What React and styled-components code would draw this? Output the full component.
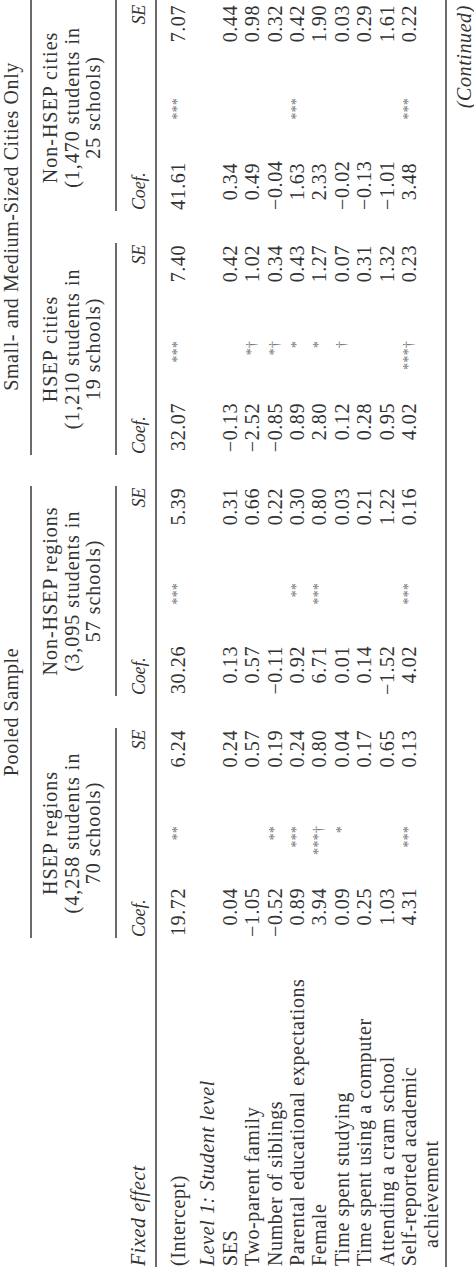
import React from 'react';
import styled, { createGlobalStyle } from 'styled-components';

const RULE = '#6b6b6b';
const INK = '#333333';

const GlobalStyle = createGlobalStyle`
  html, body { margin: 0; padding: 0; background: #ffffff; }
  body { overflow: hidden; }
`;

const Viewport = styled.div`
  position: relative;
  width: 474px;
  height: 1269px;
  overflow: hidden;
  background: #ffffff;
`;

/* The printed table is turned a quarter turn counter-clockwise on the page. */
const Sheet = styled.div`
  width: 1269px;
  height: 474px;
  transform-origin: 0 0;
  transform: translateY(1269px) rotate(-90deg);
  font-family: "Liberation Serif", "Times New Roman", serif;
  font-size: 20px;
  color: ${INK};
  letter-spacing: 0.6px;
`;

const Table = styled.table`
  width: 1269px;
  table-layout: fixed;
  border-collapse: separate;
  border-spacing: 0;
  margin-top: -2px;
  font-family: "Liberation Serif", "Times New Roman", serif;
  font-size: 20px;
  color: ${INK};
`;

const Col = styled.col`
  width: ${(p) => p.$w}px;
`;

const SpanHead = styled.th`
  font-weight: normal;
  text-align: center;
  white-space: nowrap;
  line-height: 22px;
  vertical-align: top;
  padding: 0 0 8px;
  border-bottom: ${(p) => (p.$rule ? `2px solid ${RULE}` : 'none')};
`;

const GroupHead = styled.th`
  font-weight: normal;
  text-align: center;
  white-space: nowrap;
  line-height: 21.5px;
  letter-spacing: 1px;
  vertical-align: top;
  padding: 8px ${(p) => p.$padRight || 0}px 10px 0;
  border-bottom: ${(p) => (p.$rule ? `2px solid ${RULE}` : 'none')};
`;

const ColHead = styled.th`
  font-weight: normal;
  font-style: italic;
  font-size: ${(p) => p.$size || 18}px;
  letter-spacing: ${(p) => (p.$size ? '0.6px' : '-0.2px')};
  text-align: ${(p) => p.$align || 'left'};
  white-space: nowrap;
  line-height: 22px;
  vertical-align: baseline;
  padding: 10.7px ${(p) => p.$pr || 0}px 5px ${(p) => p.$pl || 0}px;
  border-bottom: 2px solid ${RULE};
`;

const DataRow = styled.tr`
  & > td {
    padding-top: ${(p) => p.$pt || 0}px;
    padding-bottom: ${(p) => p.$pb || 0}px;
    border-bottom: ${(p) => (p.$last ? `2px solid ${RULE}` : 'none')};
  }
`;

const Label = styled.td`
  text-align: left;
  white-space: nowrap;
  vertical-align: top;
  line-height: 22.4px;
  padding-left: 1px;
  font-style: ${(p) => (p.$italic ? 'italic' : 'normal')};
`;

const Indent = styled.span`
  display: block;
  padding-left: 18px;
`;

const Num = styled.td`
  text-align: right;
  white-space: nowrap;
  vertical-align: top;
  line-height: 22.4px;
  padding-right: ${(p) => p.$pr || 0}px;
`;

const Sig = styled.span`
  font-size: 14.5px;
  line-height: 1;
  letter-spacing: 0;
  color: #777777;
  vertical-align: 3px;
`;

const Blank = styled.td``;
const BlankHead = styled.th`
  padding: 0;
  border-bottom: ${(p) => (p.$rule ? `2px solid ${RULE}` : 'none')};
`;

const Continued = styled.div`
  text-align: right;
  font-style: italic;
  line-height: 22px;
  padding-right: 7px;
  margin-top: 5.5px;
`;

const groups = [
  { title: 'HSEP regions', n: '4,258', s: '70', w: [50, 62, 98] },
  { title: 'Non-HSEP regions', n: '3,095', s: '57', w: [50, 63, 97] },
  { title: 'HSEP cities', n: '1,210', s: '19', w: [52, 62, 98] },
  { title: 'Non-HSEP cities', n: '1,470', s: '25', w: [48, 65, 95] },
];
const gaps = [32, 31, 32];
const TRAIL = 5;

const rows = [
  {
    label: '(Intercept)',
    v: [['19.72', '**', '6.24'], ['30.26', '***', '5.39'], ['32.07', '***', '7.40'], ['41.61', '***', '7.07']],
    pt: 9.8,
    pb: 7,
  },
  { label: 'Level 1: Student level', italic: true },
  { label: 'SES', v: [['0.04', '', '0.24'], ['0.13', '', '0.31'], ['−0.13', '', '0.42'], ['0.34', '', '0.44']] },
  { label: 'Two-parent family', v: [['−1.05', '', '0.57'], ['0.57', '', '0.66'], ['−2.52', '*†', '1.02'], ['0.49', '', '0.98']] },
  { label: 'Number of siblings', v: [['−0.52', '**', '0.19'], ['−0.11', '', '0.22'], ['−0.85', '*†', '0.34'], ['−0.04', '', '0.32']] },
  {
    label: 'Parental educational expectations',
    v: [['0.89', '***', '0.24'], ['0.92', '**', '0.30'], ['0.89', '*', '0.43'], ['1.63', '***', '0.42']],
  },
  { label: 'Female', v: [['3.94', '***†', '0.80'], ['6.71', '***', '0.80'], ['2.80', '*', '1.27'], ['2.33', '', '1.90']] },
  { label: 'Time spent studying', v: [['0.09', '*', '0.04'], ['0.01', '', '0.03'], ['0.12', '†', '0.07'], ['−0.02', '', '0.03']] },
  {
    label: 'Time spent using a computer',
    v: [['0.25', '', '0.17'], ['0.14', '', '0.21'], ['0.28', '', '0.31'], ['−0.13', '', '0.29']],
  },
  { label: 'Attending a cram school', v: [['1.03', '', '0.65'], ['−1.52', '', '1.22'], ['0.95', '', '1.32'], ['−1.01', '', '1.61']] },
  {
    label: 'Self-reported academic',
    wrap: 'achievement',
    v: [['4.31', '***', '0.13'], ['4.02', '***', '0.16'], ['4.02', '***†', '0.23'], ['3.48', '***', '0.22']],
    pb: 2.5,
    last: true,
  },
];

function DataCells({ v }) {
  const cells = [];
  groups.forEach((g, i) => {
    const val = v ? v[i] : ['', '', ''];
    cells.push(<Num key={`c${i}`}>{val[0]}</Num>);
    cells.push(
      <Num key={`s${i}`}>
        {val[1] ? <Sig>{val[1]}</Sig> : null}
      </Num>
    );
    cells.push(
      <Num key={`e${i}`} $pr={2}>
        {val[2]}
      </Num>
    );
    if (i < gaps.length) cells.push(<Blank key={`g${i}`} />);
  });
  cells.push(<Blank key="trail" />);
  return cells;
}

export default function App() {
  return (
    <>
      <GlobalStyle />
      <Viewport>
        <Sheet>
          <Table>
            <colgroup>
              <Col $w={329} />
              {groups.map((g, i) => (
                <React.Fragment key={g.title}>
                  <Col $w={g.w[0]} />
                  <Col $w={g.w[1]} />
                  <Col $w={g.w[2]} />
                  {i < gaps.length ? <Col $w={gaps[i]} /> : null}
                </React.Fragment>
              ))}
              <Col $w={TRAIL} />
            </colgroup>
            <thead>
              <tr>
                <BlankHead />
                <SpanHead colSpan={7} $rule>
                  Pooled Sample
                </SpanHead>
                <BlankHead />
                <SpanHead colSpan={8} $rule>
                  Small- and Medium-Sized Cities Only
                </SpanHead>
              </tr>
              <tr>
                <BlankHead />
                {groups.map((g, i) => (
                  <React.Fragment key={g.title}>
                    <GroupHead
                      colSpan={i === groups.length - 1 ? 4 : 3}
                      $padRight={i === groups.length - 1 ? 6 : 0}
                      $rule
                    >
                      {g.title}
                      <br />({g.n} students in
                      <br />
                      {g.s} schools)
                    </GroupHead>
                    {i < gaps.length ? <BlankHead /> : null}
                  </React.Fragment>
                ))}
              </tr>
              <tr>
                <ColHead $size={20} $pl={1}>
                  Fixed effect
                </ColHead>
                {groups.map((g, i) => (
                  <React.Fragment key={g.title}>
                    <ColHead colSpan={2} $pl={1}>
                      Coef.
                    </ColHead>
                    <ColHead $align="right" $pr={2}>
                      SE
                    </ColHead>
                    {i < gaps.length ? <ColHead /> : null}
                  </React.Fragment>
                ))}
                <ColHead />
              </tr>
            </thead>
            <tbody>
              {rows.map((r) => (
                <DataRow key={r.label} $pt={r.pt} $pb={r.pb} $last={r.last}>
                  <Label $italic={r.italic}>
                    {r.label}
                    {r.wrap ? <Indent>{r.wrap}</Indent> : null}
                  </Label>
                  <DataCells v={r.v} />
                </DataRow>
              ))}
            </tbody>
          </Table>
          <Continued>(Continued)</Continued>
        </Sheet>
      </Viewport>
    </>
  );
}
